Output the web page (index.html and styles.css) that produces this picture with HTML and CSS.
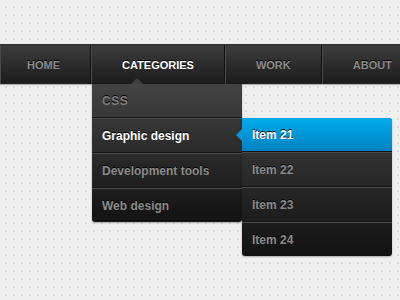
FILE: index.html
```html
<!DOCTYPE html>
<html lang="en">
<head>
  <meta charset="UTF-8" />
  <title>Dropdown menu</title>
  <link rel="stylesheet" href="styles.css">
</head>
<body>

  <!-- Main navigation -->
  <nav class="menu">
    <ul class="menu-bar">
      <li class="menu-item"><a href="#">Home</a></li>
      <li class="menu-item open">
        <a href="#" class="current">Categories</a>
        <ul class="dropdown">
          <li><a href="#" class="first">CSS</a></li>
          <li class="has-sub">
            <a href="#" class="current">Graphic design</a>
            <ul class="submenu">
              <li><a href="#" class="selected">Item 21</a></li>
              <li><a href="#">Item 22</a></li>
              <li><a href="#">Item 23</a></li>
              <li><a href="#">Item 24</a></li>
            </ul>
          </li>
          <li><a href="#">Development tools</a></li>
          <li><a href="#">Web design</a></li>
        </ul>
      </li>
      <li class="menu-item"><a href="#">Work</a></li>
      <li class="menu-item"><a href="#">About</a></li>
    </ul>
  </nav>

</body>
</html>
```

FILE: styles.css
```css
*, *::before, *::after {
  box-sizing: border-box;
}

:root {
  --color-bg: #efefef;
  --color-dot: #d9d9d9;
  --color-text: #8c8c8c;
  --color-active: #ffffff;
  --color-blue: #0096d6;
}

html, body {
  margin: 0;
  padding: 0;
  height: 100%;
  font-family: 'Liberation Sans', Arial, sans-serif;
  background-color: var(--color-bg);
  background-image: radial-gradient(circle, var(--color-dot) 0.8px, transparent 1.2px);
  background-size: 8px 8px;
  background-position: 2px 3px;
  overflow: hidden;
}

ul {
  list-style: none;
  margin: 0;
  padding: 0;
}

a {
  text-decoration: none;
}

.menu {
  margin-top: 44px;
  height: 40px;
  background: linear-gradient(#3d3d3d, #1b1b1b);
  border-top: 1px solid #2a2a2a;
  box-shadow: 0 1px 1px rgba(0, 0, 0, 0.25);
}

.menu-bar {
  display: flex;
  height: 100%;
}

.menu-item {
  position: relative;
  height: 100%;
  border-left: 1px solid #4a4a4a;
  border-right: 1px solid #121212;
}

.menu-item > a {
  display: flex;
  align-items: center;
  height: 100%;
  padding: 0 30px;
  font-size: 11px;
  font-weight: 700;
  text-transform: uppercase;
  color: var(--color-text);
  text-shadow: 0 -1px 0 #000;
}

.menu-item:first-child > a {
  padding-left: 26px;
}

.menu-item:last-child {
  border-right: 0;
}

.menu-item:last-child > a {
  padding-right: 5px;
}

.menu-item > a.current {
  color: var(--color-active);
}

.dropdown {
  position: absolute;
  top: 39px;
  left: 0;
  width: 150px;
  background: linear-gradient(#434343, #121212);
  border-radius: 0 0 3px 3px;
  box-shadow: 0 1px 2px rgba(0, 0, 0, 0.3);
}

/* caret under the open item */
.dropdown::before {
  content: '';
  position: absolute;
  top: -6px;
  left: 39px;
  border: 6px solid transparent;
  border-top: 0;
  border-bottom-color: #404040;
}

.dropdown li {
  position: relative;
  border-top: 1px solid #4c4c4c;
  border-bottom: 1px solid #141414;
}

.dropdown li:first-child {
  border-top: 0;
}

.dropdown li:last-child {
  border-bottom: 0;
}

.dropdown a {
  display: flex;
  align-items: center;
  height: 33px;
  padding: 0 10px;
  font-size: 12px;
  font-weight: 700;
  color: var(--color-text);
  text-shadow: 0 -1px 0 #000;
}

.dropdown a.first {
  color: #7e7e7e;
  letter-spacing: 0.5px;
}

.dropdown a.current {
  color: var(--color-active);
}

.submenu {
  position: absolute;
  top: -1px;
  left: 150px;
  width: 150px;
  background: linear-gradient(#3b3b3b, #121212);
  border-radius: 0 3px 3px 3px;
  box-shadow: 0 1px 2px rgba(0, 0, 0, 0.3);
}

.submenu li:first-child {
  border-top: 0;
}

.submenu a.selected {
  position: relative;
  color: var(--color-active);
  background: linear-gradient(#00abea, #0082c2);
  border-radius: 0 3px 0 0;
}

/* pointer toward the parent item */
.submenu a.selected::before {
  content: '';
  position: absolute;
  left: -6px;
  top: 11px;
  border: 6px solid transparent;
  border-left: 0;
  border-right-color: #0098d8;
}
```
